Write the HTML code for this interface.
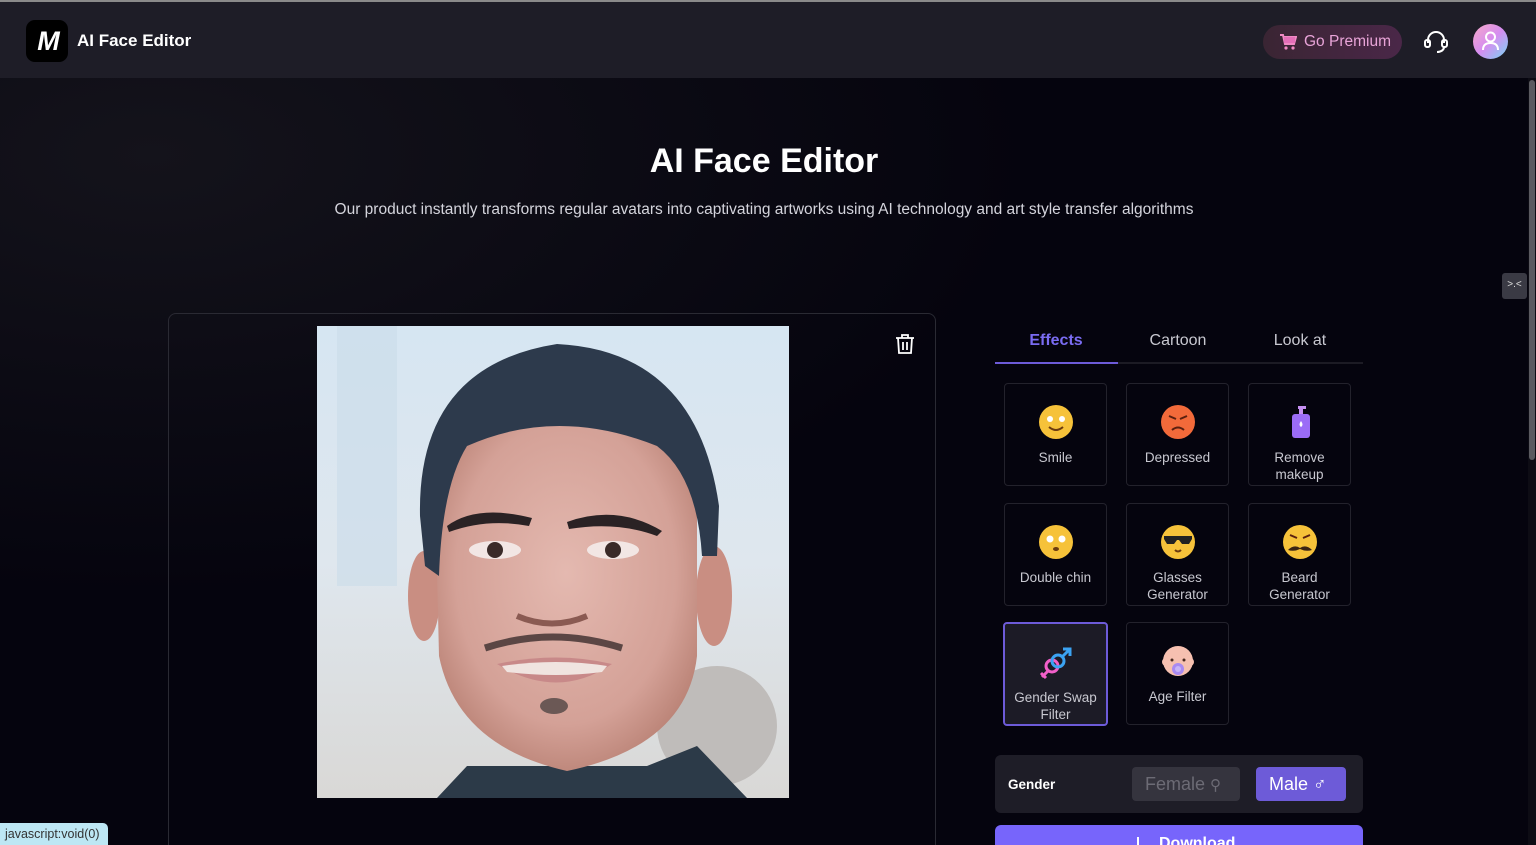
<!DOCTYPE html>
<html><head><meta charset="utf-8"><style>
*{margin:0;padding:0;box-sizing:border-box}
html{width:1536px;height:845px;overflow:hidden}
body{width:1536px;height:845px;overflow:hidden;background:#05040e;font-family:"Liberation Sans",sans-serif;position:relative;color:#fff}
.top{position:absolute;left:0;top:0;width:1536px;height:78px;background:#1e1d27;border-top:2px solid #8a8a8a}
.logo{position:absolute;left:26px;top:18px;width:42px;height:42px;background:#000;border-radius:9px;color:#fff;font-weight:bold;font-style:italic;font-size:27px;text-align:center;line-height:42px;letter-spacing:-3px}
.brand{position:absolute;left:77px;top:29px;font-size:17px;font-weight:bold}
.prem{position:absolute;left:1263px;top:23px;width:139px;height:34px;border-radius:17px;background:linear-gradient(90deg,#3a2533,#4a2748);color:#e8a4d8;font-size:15.5px;line-height:34px;padding-left:41px}
.content{position:absolute;left:0;top:78px;width:1528px;height:767px;background:radial-gradient(ellipse at 10% 10%,#14131b 0,#05040e 45%)}
h1{position:absolute;left:0;width:1528px;top:142px;text-align:center;font-size:34px;font-weight:bold}
.sub{position:absolute;left:0;width:1528px;top:201px;text-align:center;font-size:15.5px;color:#d4d4dc}
.card{position:absolute;left:168px;top:313px;width:768px;height:540px;border:1px solid #2a2a33;border-radius:8px}
.photo{position:absolute;left:317px;top:326px;width:472px;height:472px}
.tabs{position:absolute;left:995px;top:330px;width:368px;height:34px;border-bottom:2px solid #1c1b24;font-size:16px}
.tabs div{position:absolute;top:2px;width:122px;text-align:center;color:#c8c8d0}
.tile{position:absolute;width:103px;height:103px;border:1px solid #23222c;border-radius:4px;text-align:center;font-size:13.5px;color:#c8c8d0;line-height:17px}
.tile .ic{position:absolute;left:33px;top:20px;width:36px;height:36px}
.tile .t{position:absolute;left:0;width:100%;top:65px}
.sel{border:2px solid #6d5bd8;background:#1c1b26}
.gender{position:absolute;left:995px;top:755px;width:368px;height:58px;background:#1e1d27;border-radius:6px}
.dl{position:absolute;left:995px;top:825px;width:368px;height:20px;background:#7765fb;border-radius:6px 6px 0 0;overflow:hidden}
.scroll{position:absolute;left:1528px;top:78px;width:8px;height:767px;background:#0d0c14}
.thumb{position:absolute;left:1529px;top:80px;width:6px;height:380px;background:#5a5a60;border-radius:3px}
</style></head><body>
<div class="top">
<div class="logo">M</div><div class="brand">AI Face Editor</div>
<div class="prem"><svg style="position:absolute;left:16px;top:8px" width="18" height="18" viewBox="0 0 18 18"><path d="M1 2h3l2 9h9l2-7H5" fill="none" stroke="#f08ac4" stroke-width="2"/><rect x="5" y="4" width="11" height="6" fill="#e46fb8"/><circle cx="7" cy="15" r="1.6" fill="#f08ac4"/><circle cx="14" cy="15" r="1.6" fill="#f08ac4"/></svg>Go Premium</div>
<svg style="position:absolute;left:1423px;top:26px" width="26" height="26" viewBox="0 0 26 26" fill="none" stroke="#fff" stroke-width="2"><path d="M5 15v-3a8 8 0 0 1 16 0v3"/><rect x="2" y="12" width="5" height="7" rx="2"/><rect x="19" y="12" width="5" height="7" rx="2"/><path d="M21 19c0 3-3 5-7 5"/></svg>
<div style="position:absolute;left:1473px;top:22px;width:35px;height:35px;border-radius:50%;background:linear-gradient(135deg,#f7a9c7,#d58df0 50%,#79d6f5)"><svg width="35" height="35" viewBox="0 0 35 35" fill="none" stroke="#fff" stroke-width="2"><circle cx="17.5" cy="13" r="4.5"/><path d="M10 26c0-5 3-7 7.5-7s7.5 2 7.5 7"/></svg></div>
</div>
<div class="content"></div>
<h1>AI Face Editor</h1>
<div class="sub">Our product instantly transforms regular avatars into captivating artworks using AI technology and art style transfer algorithms</div>
<div class="card"></div>
<svg class="photo" viewBox="0 0 472 472">
<defs><linearGradient id="bg" x1="0" y1="0" x2="0" y2="1"><stop offset="0" stop-color="#d6e6f2"/><stop offset=".5" stop-color="#dfe7ee"/><stop offset="1" stop-color="#d9d8d6"/></linearGradient>
<radialGradient id="sk" cx=".5" cy=".45" r=".6"><stop offset="0" stop-color="#e4b9b0"/><stop offset=".7" stop-color="#d4a197"/><stop offset="1" stop-color="#b77f72"/></radialGradient></defs>
<rect width="472" height="472" fill="url(#bg)"/>
<rect x="20" y="0" width="60" height="260" fill="#c9dcea" opacity=".6"/>
<ellipse cx="400" cy="400" rx="60" ry="60" fill="#bfbcba"/>
<path d="M120 472 L150 440 L330 440 L380 420 L430 472Z" fill="#2c3a48"/>
<ellipse cx="107" cy="270" rx="16" ry="45" fill="#c98e82"/>
<ellipse cx="397" cy="270" rx="18" ry="50" fill="#c98e82"/>
<path d="M118 160 Q120 90 240 85 Q370 90 380 170 L380 330 Q370 420 250 445 Q140 420 122 330Z" fill="url(#sk)"/>
<path d="M103 190 Q100 40 240 18 Q380 25 402 180 L400 230 L385 230 Q380 150 340 120 Q240 80 150 120 Q125 160 122 250 L108 240Z" fill="#2d3a4c"/>
<path d="M130 200 Q160 178 215 192 L212 200 Q170 192 132 206Z" fill="#2a2224"/>
<path d="M250 196 Q300 178 345 205 L340 210 Q300 195 252 203Z" fill="#2a2224"/>
<ellipse cx="178" cy="224" rx="26" ry="9" fill="#f2e6e4"/><circle cx="178" cy="224" r="8" fill="#3a2a28"/>
<ellipse cx="296" cy="224" rx="26" ry="9" fill="#f2e6e4"/><circle cx="296" cy="224" r="8" fill="#3a2a28"/>
<path d="M200 290 Q235 305 270 290" stroke="#8a5a52" stroke-width="6" fill="none"/>
<path d="M168 322 Q235 300 305 322" stroke="#5b4644" stroke-width="7" fill="none"/>
<path d="M180 338 Q240 325 295 338 Q240 375 180 338Z" fill="#c88989"/>
<path d="M185 340 Q240 332 290 340 L285 346 Q240 352 190 346Z" fill="#f0e4e0"/>
<ellipse cx="237" cy="380" rx="14" ry="8" fill="#6b5855"/>
</svg>
<svg style="position:absolute;left:895px;top:333px" width="20" height="22" viewBox="0 0 20 22" fill="none" stroke="#fff" stroke-width="1.8"><path d="M1 5h18M7 5V2h6v3M3 5l1 15h12l1-15M8 9v8M12 9v8"/></svg>
<div style="position:absolute;left:1502px;top:273px;width:25px;height:26px;background:#3a3a44;border-radius:3px;color:#ddd;font-size:10px;text-align:center;line-height:24px">&gt;.&lt;</div>
<div class="scroll"></div><div class="thumb"></div>
<div class="tabs"><div style="left:0;color:#7a6cf2;font-weight:bold">Effects</div><div style="left:122px">Cartoon</div><div style="left:244px">Look at</div>
<span style="position:absolute;left:0;top:32px;width:123px;height:2px;background:#6d5bd8"></span></div>

<div class="tile" style="left:1004px;top:383px"><svg class="ic" viewBox="0 0 36 36"><circle cx="18" cy="18" r="17" fill="#f6c23a"/><circle cx="12" cy="15" r="3" fill="#fff"/><circle cx="24" cy="15" r="3" fill="#fff"/><path d="M11 23q7 6 14 0" stroke="#6b3b10" stroke-width="2" fill="none"/></svg><div class="t">Smile</div></div>
<div class="tile" style="left:1126px;top:383px"><svg class="ic" viewBox="0 0 36 36"><circle cx="18" cy="18" r="17" fill="#f26a3a"/><path d="M9 12l7 3M27 12l-7 3" stroke="#5a2010" stroke-width="2"/><path d="M12 26q6-5 12 0" stroke="#5a2010" stroke-width="2" fill="none"/></svg><div class="t">Depressed</div></div>
<div class="tile" style="left:1248px;top:383px"><svg class="ic" viewBox="0 0 36 36"><rect x="16" y="2" width="8" height="3" fill="#c48ff0"/><rect x="17" y="4" width="4" height="6" fill="#c48ff0"/><rect x="10" y="10" width="18" height="24" rx="3" fill="#9b6cf6"/><path d="M19 17q-3 4 0 6q3-2 0-6" fill="#fff"/></svg><div class="t">Remove<br>makeup</div></div>
<div class="tile" style="left:1004px;top:503px"><svg class="ic" viewBox="0 0 36 36"><circle cx="18" cy="18" r="17" fill="#f6c23a"/><circle cx="12" cy="15" r="3.5" fill="#fff"/><circle cx="24" cy="15" r="3.5" fill="#fff"/><ellipse cx="18" cy="25" rx="3" ry="2" fill="#6b3b10"/></svg><div class="t">Double chin</div></div>
<div class="tile" style="left:1126px;top:503px"><svg class="ic" viewBox="0 0 36 36"><circle cx="18" cy="18" r="17" fill="#f6c23a"/><path d="M4 12h28v3l-3 5h-7l-3-4h-2l-3 4H7l-3-5z" fill="#222"/><path d="M15 26q3 3 6 0" stroke="#6b3b10" stroke-width="2" fill="none"/></svg><div class="t">Glasses<br>Generator</div></div>
<div class="tile" style="left:1248px;top:503px"><svg class="ic" viewBox="0 0 36 36"><circle cx="18" cy="18" r="17" fill="#f6c23a"/><path d="M8 11l7 3M28 11l-7 3" stroke="#5a2010" stroke-width="2"/><path d="M6 26q6-6 12-2q6-4 12 2q-6 2-12-1q-6 3-12 1z" fill="#3a2414"/></svg><div class="t">Beard<br>Generator</div></div>
<div class="tile sel" style="left:1003px;top:622px;width:105px;height:104px"><svg class="ic" viewBox="0 0 36 36"><circle cx="14" cy="22" r="6" fill="none" stroke="#f25fc9" stroke-width="3"/><path d="M10 27l-6 6M3 29l5 5" stroke="#f25fc9" stroke-width="3"/><circle cx="20" cy="17" r="6" fill="none" stroke="#3ba3f2" stroke-width="3"/><path d="M24 13l7-7M25 5h7v7" stroke="#3ba3f2" stroke-width="3" fill="none"/></svg><div class="t">Gender Swap<br>Filter</div></div>
<div class="tile" style="left:1126px;top:622px"><svg class="ic" viewBox="0 0 36 36"><circle cx="18" cy="18" r="15" fill="#f6c0b0"/><circle cx="6" cy="19" r="4" fill="#f6c0b0"/><circle cx="30" cy="19" r="4" fill="#f6c0b0"/><circle cx="18" cy="26" r="6" fill="#a98af2"/><circle cx="18" cy="26" r="3" fill="#c7b4f8"/><circle cx="12" cy="17" r="1.5" fill="#4a2a20"/><circle cx="24" cy="17" r="1.5" fill="#4a2a20"/></svg><div class="t">Age Filter</div></div>

<div class="gender"><span style="position:absolute;left:13px;top:22px;font-size:13.5px;font-weight:bold">Gender</span>
<div style="position:absolute;left:137px;top:12px;width:108px;height:34px;background:#35343e;border-radius:4px;color:#6c6b75;font-size:18px;line-height:34px;padding-left:13px">Female <span style="font-size:15px">⚲</span></div>
<div style="position:absolute;left:261px;top:12px;width:90px;height:34px;background:#6d5bd8;border-radius:4px;color:#fff;font-size:18px;line-height:34px;padding-left:13px">Male ♂</div></div>
<div class="dl"><span style="position:absolute;left:142px;top:12px;width:2px;height:18px;background:#fff"></span><span style="position:absolute;left:164px;top:10px;font-size:16px;font-weight:bold">Download</span></div>
<div style="position:absolute;left:0;top:823px;width:108px;height:22px;background:#bde7f4;border-radius:0 5px 0 0;color:#333;font-size:12.5px;line-height:22px;padding-left:5px">javascript:void(0)</div>
</body></html>
